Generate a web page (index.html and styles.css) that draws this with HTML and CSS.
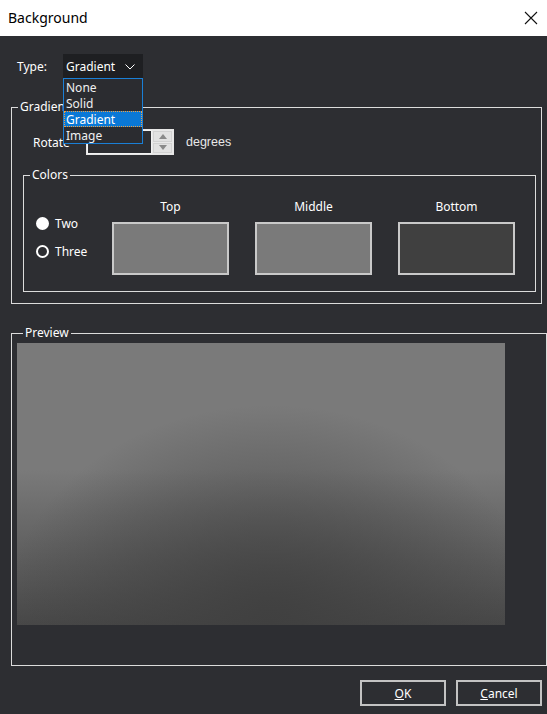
FILE: index.html
```html
<!DOCTYPE html>
<html lang="en">
<head>
<meta charset="utf-8">
<title>Background</title>
<link rel="stylesheet" href="styles.css">
</head>
<body>
<div class="window">
  <div class="titlebar">
    <span class="title">Background</span>
    <svg class="close" width="14" height="14" viewBox="0 0 14 14"><path d="M1 1 L13 13 M13 1 L1 13" stroke="#111" stroke-width="1.1" fill="none"/></svg>
  </div>
  <div class="main">
    <div class="type-row">
      <span class="type-label">Type:</span>
      <div class="combo-wrap">
        <div class="combo">
          <span>Gradient</span>
          <svg class="chevron" width="10" height="6" viewBox="0 0 10 6"><path d="M0.5 0.5 L5 5 L9.5 0.5" stroke="#fff" stroke-width="1" fill="none"/></svg>
        </div>
        <ul class="dropdown">
          <li>None</li>
          <li>Solid</li>
          <li class="selected">Gradient</li>
          <li>Image</li>
        </ul>
      </div>
    </div>

    <fieldset class="group gradient-group">
      <legend>Gradient</legend>
      <div class="rotate-row">
        <span class="rotate-label">Rotate</span>
        <div class="spin">
          <div class="spin-input"></div>
          <div class="spin-btns">
            <div class="spin-btn"><svg width="8" height="5" viewBox="0 0 8 5"><path d="M0 5 L4 0 L8 5 Z" fill="#8a8a8a"/></svg></div>
            <div class="spin-btn"><svg width="8" height="5" viewBox="0 0 8 5"><path d="M0 0 L4 5 L8 0 Z" fill="#8a8a8a"/></svg></div>
          </div>
        </div>
        <span class="degrees">degrees</span>
      </div>

      <fieldset class="group colors-group">
        <legend>Colors</legend>
        <div class="colors-row">
          <div class="radios">
            <label class="radio"><span class="dot checked"></span>Two</label>
            <label class="radio"><span class="dot"></span>Three</label>
          </div>
          <div class="swatches">
            <div class="swatch-col"><div class="swatch-label">Top</div><div class="swatch swatch-top"></div></div>
            <div class="swatch-col"><div class="swatch-label">Middle</div><div class="swatch swatch-middle"></div></div>
            <div class="swatch-col"><div class="swatch-label">Bottom</div><div class="swatch swatch-bottom"></div></div>
          </div>
        </div>
      </fieldset>
    </fieldset>

    <fieldset class="group preview-group">
      <legend>Preview</legend>
      <div class="preview"></div>
    </fieldset>

    <div class="buttons">
      <button class="btn"><u>O</u>K</button>
      <button class="btn"><u>C</u>ancel</button>
    </div>
  </div>
</div>
</body>
</html>
```

FILE: styles.css
```css
html, body {
  margin: 0;
  padding: 0;
}
body {
  width: 547px;
  height: 714px;
  overflow: hidden;
  font-family: "Noto Sans", "Open Sans", sans-serif;
  font-size: 12px;
  color: #ffffff;
  background: #2d2e32;
}
.window {
  display: flex;
  flex-direction: column;
  height: 714px;
}
.titlebar {
  height: 36px;
  flex: 0 0 36px;
  background: #ffffff;
  color: #000000;
  display: flex;
  align-items: center;
  justify-content: space-between;
  padding: 0 9px 0 8px;
  box-sizing: border-box;
  font-size: 14px;
}
.title {
  padding-bottom: 1px;
}
.main {
  flex: 1;
  background: #2d2e32;
  box-sizing: border-box;
  padding: 18px 0 0 11px;
  display: flex;
  flex-direction: column;
}

/* Type row */
.type-row {
  display: flex;
  align-items: center;
  height: 24px;
  padding-left: 6px;
}
.type-label {
  width: 46px;
}
.combo-wrap {
  position: relative;
  width: 80px;
  height: 24px;
}
.combo {
  height: 24px;
  background: #1e1f22;
  display: flex;
  align-items: center;
  justify-content: space-between;
  padding: 0 8px 0 3px;
  box-sizing: border-box;
}
.chevron {
  margin-top: 2px;
}
.dropdown {
  position: absolute;
  top: 24px;
  left: 0;
  width: 80px;
  box-sizing: border-box;
  margin: 0;
  padding: 0;
  list-style: none;
  border: 1px solid #1a7fd6;
  background: #2b2c30;
  z-index: 10;
}
.dropdown li {
  height: 16px;
  line-height: 17px;
  padding-left: 2px;
  color: #f0f0f0;
  box-sizing: border-box;
}
.dropdown li.selected {
  background: #0a78d6;
  color: #ffffff;
  outline: 1px dotted #f3a040;
  outline-offset: -1px;
}

/* Group boxes */
.group {
  margin: 0;
  padding: 0;
  border: 1px solid #dcdcdc;
  min-width: 0;
  box-sizing: border-box;
}
.group > legend {
  padding: 0 2px;
  margin-left: 6px;
  line-height: 16px;
  height: 16px;
  color: #ffffff;
}
.gradient-group {
  margin-top: 21px;
  width: 531px;
  padding-bottom: 11px;
}
.rotate-row {
  display: flex;
  align-items: center;
  height: 26px;
  margin-top: 14px;
  padding-left: 21px;
}
.rotate-label {
  width: 53px;
}
.spin {
  display: flex;
  width: 88px;
  height: 26px;
  box-sizing: border-box;
  border: 1px solid #e6e6e6;
}
.spin-input {
  flex: 1;
  border: 1px solid #f2f2f2;
  background: #2d2e32;
}
.spin-btns {
  width: 21px;
  display: flex;
  flex-direction: column;
  gap: 1px;
  background: #e8e8e8;
  padding: 1px;
  box-sizing: border-box;
}
.spin-btn {
  flex: 1;
  display: flex;
  align-items: center;
  justify-content: center;
  background: #e2e2e2;
  border: 1px solid #d2d2d2;
}
.degrees {
  margin-left: 12px;
  font-family: "Liberation Sans", Arial, sans-serif;
  font-size: 12.5px;
  color: #e8e8e8;
}
.colors-group {
  margin: 12px 5px 0 11px;
}
.colors-row {
  display: flex;
  padding: 16px 0 16px 12px;
}
.radios {
  width: 76px;
  padding-top: 16px;
  display: flex;
  flex-direction: column;
  gap: 12px;
}
.radio {
  display: flex;
  align-items: center;
  height: 16px;
  gap: 6px;
}
.dot {
  width: 13px;
  height: 13px;
  border-radius: 50%;
  box-sizing: border-box;
  border: 2px solid #ffffff;
}
.dot.checked {
  background: #ffffff;
}
.swatches {
  display: flex;
  gap: 26px;
}
.swatch-col {
  width: 117px;
  display: flex;
  flex-direction: column;
  gap: 7px;
}
.swatch-label {
  text-align: center;
  line-height: 16px;
  height: 16px;
}
.swatch {
  height: 53px;
  box-sizing: border-box;
  border: 2px solid #c9c9c9;
}
.swatch-top,
.swatch-middle {
  background: #7a7a7a;
}
.swatch-bottom {
  background: #404040;
}
.preview-group {
  margin-top: 21px;
  width: 536px;
  padding: 2px 0 40px 5px;
}
.preview {
  width: 488px;
  height: 282px;
  background:
    radial-gradient(ellipse 55% 78% at 52% 100%, rgba(64,64,64,1) 0%, rgba(64,64,64,0.5) 50%, rgba(64,64,64,0) 100%),
    linear-gradient(to bottom, #7a7a7a 0%, #7a7a7a 45%, #484848 100%);
}
.buttons {
  display: flex;
  justify-content: flex-end;
  gap: 10px;
  margin-top: 14px;
  padding-right: 5px;
}
.btn {
  width: 86px;
  height: 26px;
  box-sizing: border-box;
  border: 2px solid #c3c3c3;
  background: #2d2e32;
  color: #ffffff;
  font-family: "Noto Sans", "Open Sans", sans-serif;
  font-size: 12px;
  padding: 0;
}
```
